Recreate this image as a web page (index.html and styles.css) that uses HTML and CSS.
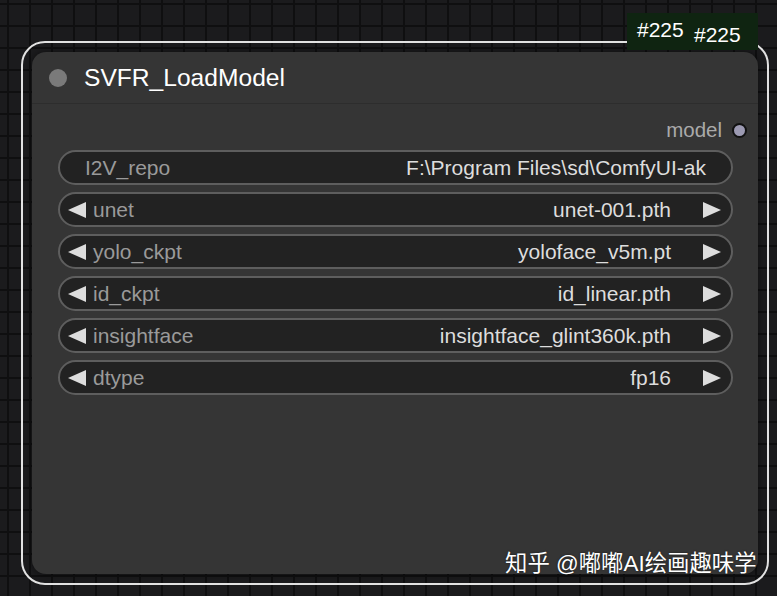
FILE: index.html
```html
<!DOCTYPE html>
<html>
<head>
<meta charset="utf-8">
<link rel="stylesheet" href="styles.css">
</head>
<body>
<div class="canvas">
  <div class="selection">
    <div class="node">
      <div class="title">
        <span class="title-dot"></span>
        <span class="title-text">SVFR_LoadModel</span>
      </div>
      <div class="outputs">
        <span class="out-label">model</span>
        <span class="out-dot"></span>
      </div>
      <div class="widgets">
        <div class="widget text">
          <span class="label">I2V_repo</span>
          <span class="value">F:\Program Files\sd\ComfyUI-ak</span>
        </div>
        <div class="widget combo">
          <span class="arrow left"></span>
          <span class="label">unet</span>
          <span class="value">unet-001.pth</span>
          <span class="arrow right"></span>
        </div>
        <div class="widget combo">
          <span class="arrow left"></span>
          <span class="label">yolo_ckpt</span>
          <span class="value">yoloface_v5m.pt</span>
          <span class="arrow right"></span>
        </div>
        <div class="widget combo">
          <span class="arrow left"></span>
          <span class="label">id_ckpt</span>
          <span class="value">id_linear.pth</span>
          <span class="arrow right"></span>
        </div>
        <div class="widget combo">
          <span class="arrow left"></span>
          <span class="label">insightface</span>
          <span class="value">insightface_glint360k.pth</span>
          <span class="arrow right"></span>
        </div>
        <div class="widget combo">
          <span class="arrow left"></span>
          <span class="label">dtype</span>
          <span class="value">fp16</span>
          <span class="arrow right"></span>
        </div>
      </div>
    </div>
    <div class="badge">
      <span class="badge-a">#225</span>
      <span class="badge-b">#225</span>
    </div>
  </div>
  <div class="watermark">知乎 @嘟嘟AI绘画趣味学</div>
</div>
</body>
</html>
```

FILE: styles.css
```css
html, body {
  margin: 0;
  padding: 0;
}
body {
  width: 777px;
  height: 596px;
  overflow: hidden;
  background-color: #1b1b1d;
  background-image:
    linear-gradient(to right, #0f0f10 0, #0f0f10 2px, transparent 2px),
    linear-gradient(to bottom, #0f0f10 0, #0f0f10 2px, transparent 2px);
  background-size: 22px 22px;
  background-position: 7px 3px;
  font-family: "Liberation Sans", Arial, sans-serif;
}
.canvas {
  position: relative;
  width: 777px;
  height: 596px;
  padding: 41px 0 0 21px;
  box-sizing: border-box;
}
.selection {
  position: relative;
  width: 726px;
  height: 522px;
  border: 2px solid #e2e2e2;
  border-radius: 24px;
  padding: 9px;
}
.node {
  width: 726px;
  height: 522px;
  background: #353535;
  border-radius: 14px;
  box-shadow: 0 0 6px rgba(0,0,0,0.5);
  display: flex;
  flex-direction: column;
}
.title {
  height: 52px;
  border-bottom: 1px solid #2d2d2d;
  display: flex;
  align-items: center;
  padding-left: 17px;
  padding-top: 1px;
  box-sizing: border-box;
}
.title-dot {
  width: 18px;
  height: 18px;
  border-radius: 50%;
  background: #7a7a7a;
}
.title-text {
  margin-left: 17px;
  color: #ffffff;
  font-size: 24.6px;
}
.outputs {
  height: 46px;
  box-sizing: border-box;
  padding-top: 6px;
  padding-right: 11px;
  display: flex;
  align-items: center;
  justify-content: flex-end;
}
.out-label {
  color: #aaaaaa;
  font-size: 20.5px;
  margin-right: 10px;
}
.out-dot {
  width: 11px;
  height: 11px;
  border-radius: 50%;
  background: #9c9ab2;
  border: 2px solid #111;
}
.widgets {
  display: flex;
  flex-direction: column;
  gap: 7px;
  padding: 0 25px 0 26px;
}
.widget {
  height: 35px;
  box-sizing: border-box;
  background: #222222;
  border: 2px solid #5e5e5e;
  border-radius: 18px;
  display: flex;
  align-items: center;
  font-size: 21px;
}
.widget .label {
  color: #9a9a9a;
}
.widget .value {
  margin-left: auto;
  color: #dddddd;
}
.widget.text {
  padding: 0 25px 0 25px;
}
.widget.combo {
  padding: 0 10px 0 8px;
}
.arrow {
  width: 0;
  height: 0;
  border-top: 8px solid transparent;
  border-bottom: 8px solid transparent;
}
.arrow.left {
  border-right: 18px solid #dddddd;
  margin-right: 7px;
}
.arrow.right {
  border-left: 18px solid #dddddd;
  margin-left: 32px;
}
.badge {
  position: absolute;
  top: -30px;
  right: 9px;
  width: 131px;
  height: 37px;
  background: #0f2411;
  color: #ffffff;
  font-size: 21px;
}
.badge-a {
  position: absolute;
  left: 10px;
  top: 5px;
}
.badge-b {
  position: absolute;
  left: 67px;
  top: 10px;
}
.watermark {
  position: absolute;
  left: 505px;
  top: 545px;
  color: #ffffff;
  font-size: 22.4px;
  font-family: "Liberation Sans", "Noto Sans CJK SC", sans-serif;
  text-shadow: 0 0 2px rgba(0,0,0,0.6);
  white-space: nowrap;
}
```
